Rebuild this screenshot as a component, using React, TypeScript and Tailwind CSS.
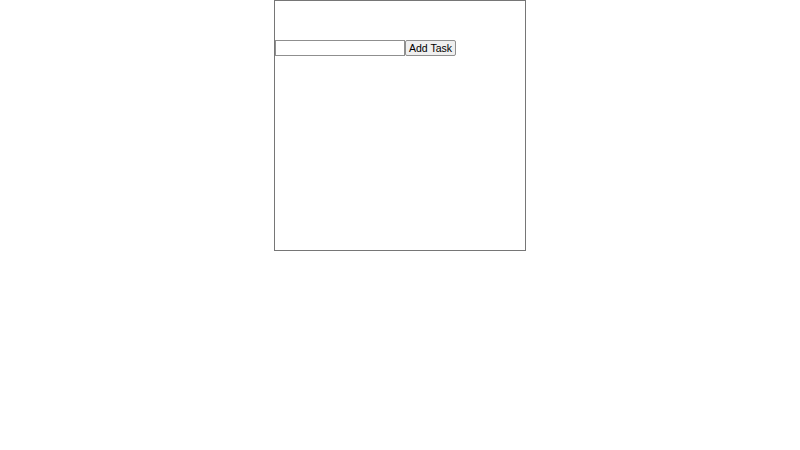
export default function App() {
  return (
    <div className="flex justify-center bg-white min-h-[450px] font-['Liberation_Sans',Arial,sans-serif]">
      <div className="w-[252px] h-[251px] border border-[#767676] pt-[39px]">
        <div className="flex items-center">
          <input
            type="text"
            className="w-[130px] h-[16px] border border-[#8f8f8f] bg-white px-[2px] text-[10px] outline-none"
          />
          <button className="h-[16px] px-[3px] border border-[#8f8f8f] rounded-[2px] bg-[#efefef] text-[10.5px] leading-none text-black">
            Add Task
          </button>
        </div>
      </div>
    </div>
  );
}
